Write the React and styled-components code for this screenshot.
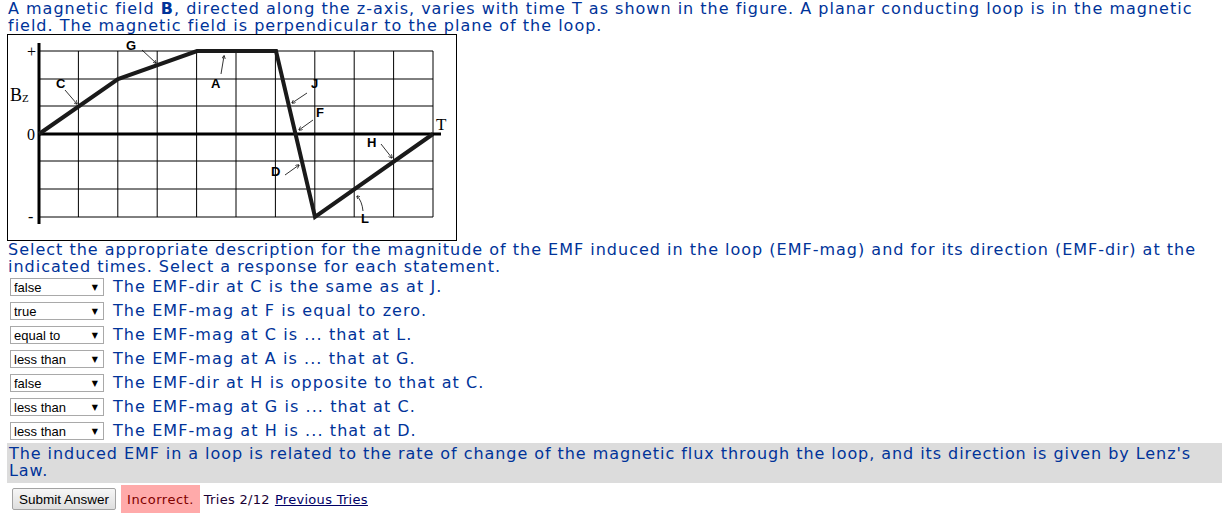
import styled, { createGlobalStyle } from 'styled-components';

const GlobalStyle = createGlobalStyle`
body {
  margin: 0 7px;
  background: #fff;
  font-family: "DejaVu Sans", Verdana, sans-serif;
  font-size: 16px;
  letter-spacing: 1px;
  color: #003399;
}
`;

const Page = styled.div`
padding-top: 1px;
`;

const Para = styled.p`
margin: 0 0 0 1px;
line-height: 16.5px;
`;

const Figure = styled.div`
width: 448px;
height: 205px;
border: 1px solid #000;
margin: 0 0 1px;
`;

const Rows = styled.div`
display: flex;
flex-direction: column;
`;

const Row = styled.div`
display: flex;
align-items: center;
height: 24px;
`;

const SelectBox = styled.div`
display: flex;
align-items: center;
width: 92px;
height: 16px;
margin: 0 9px 0 3px;
border: 1px solid #a9a9a9;
background: #fff;
`;

const Select = styled.select`
appearance: none;
flex: 1;
min-width: 0;
border: none;
outline: none;
background: transparent;
padding: 0 0 0 3px;
font-family: "Liberation Sans", Arial, sans-serif;
font-size: 13px;
letter-spacing: 0;
color: #000;
`;

const Arrow = styled.span`
font-size: 8px;
letter-spacing: 0;
color: #000;
margin-right: 5px;
`;

const Statement = styled.span`
line-height: 24px;
letter-spacing: 1.08px;
`;

const Hint = styled.div`
background: #dcdcdc;
padding: 3px 4px 4px 3px;
margin: 0 0 0 -1px;
line-height: 16.5px;
letter-spacing: 0.94px;
`;

const Actions = styled.div`
display: flex;
align-items: center;
height: 28px;
margin-top: 2px;
font-size: 13px;
letter-spacing: 0.3px;
`;

const SubmitButton = styled.button`
height: 22px;
margin: 0 5px 0 5px;
padding: 0 6px;
border: 1px solid #a3a3a3;
border-radius: 2px;
background: linear-gradient(#f6f6f6, #dedede);
font-family: "Liberation Sans", Arial, sans-serif;
font-size: 13.5px;
letter-spacing: 0;
color: #000;
`;

const Verdict = styled.span`
display: flex;
align-items: center;
height: 28px;
padding: 0 6px 0 6px;
background: #ffaaaa;
color: #800000;
letter-spacing: 0.5px;
`;

const Tries = styled.span`
margin-left: 4px;
color: #1a0033;
`;

const PrevLink = styled.a`
margin-left: 5px;
color: #000066;
text-decoration: underline;
`;

const xs = [39, 78.4, 117.8, 157.2, 196.6, 236, 275.4, 314.8, 354.2, 393.6, 433];
const ys = [50, 78, 105, 160, 188, 216];
const curve = '39,133 118,78 197,50 276,50 315,216 433,133';

const pointers = [
  { l: 'C', x: 56, y: 87, d: 'M65 89 L77 103' },
  { l: 'G', x: 126, y: 49, d: 'M142 49 L156 62' },
  { l: 'A', x: 211, y: 87, d: 'M221 73 L224 55' },
  { l: 'J', x: 311, y: 87, d: 'M307 92 L292 102' },
  { l: 'F', x: 316, y: 116, d: 'M313 119 L299 129' },
  { l: 'D', x: 271, y: 175, d: 'M285 174 L299 164' },
  { l: 'H', x: 367, y: 146, d: 'M381 143 L392 157' },
  { l: 'L', x: 361, y: 222, d: 'M363 210 Q362 200 357 195' },
];

const Graph = () => (
  <svg width="448" height="205" viewBox="8 34 448 205">
    <defs>
      <marker id="head" viewBox="0 0 6 6" refX="5" refY="3" markerWidth="5" markerHeight="5" orient="auto">
        <path d="M0 0 L6 3 L0 6" fill="none" stroke="#000" strokeWidth="1" />
      </marker>
    </defs>
    {xs.slice(1).map(x => (
      <line key={x} x1={x} y1="50" x2={x} y2="216" stroke="#000" strokeWidth="1" />
    ))}
    {ys.map(y => (
      <line key={y} x1="39" y1={y} x2="433" y2={y} stroke="#000" strokeWidth="1" />
    ))}
    <line x1="39" y1="42" x2="39" y2="223" stroke="#000" strokeWidth="3" />
    <line x1="39" y1="133" x2="441" y2="133" stroke="#000" strokeWidth="3" />
    <polyline points={curve} fill="none" stroke="#1a1a1a" strokeWidth="4" strokeLinejoin="miter" />
    <g fontFamily="'Liberation Serif', 'Times New Roman', serif" fill="#000" letterSpacing="0">
      <text x="27" y="56" fontSize="16">+</text>
      <text x="10" y="100" fontSize="18">B</text>
      <text x="22" y="101" fontSize="11">Z</text>
      <text x="27" y="139" fontSize="16">0</text>
      <text x="28" y="221" fontSize="16">-</text>
      <text x="436" y="129" fontSize="17">T</text>
    </g>
    <g fontFamily="'Liberation Sans', Arial, sans-serif" fontSize="13" fontWeight="bold" fill="#000" letterSpacing="0">
      {pointers.map(p => (
        <text key={p.l} x={p.x} y={p.y}>{p.l}</text>
      ))}
    </g>
    {pointers.map(p => (
      <path key={p.l} d={p.d} fill="none" stroke="#000" strokeWidth="0.8" markerEnd="url(#head)" />
    ))}
  </svg>
);

const statements = [
  ['false', 'The EMF-dir at C is the same as at J.'],
  ['true', 'The EMF-mag at F is equal to zero.'],
  ['equal to', 'The EMF-mag at C is ... that at L.'],
  ['less than', 'The EMF-mag at A is ... that at G.'],
  ['false', 'The EMF-dir at H is opposite to that at C.'],
  ['less than', 'The EMF-mag at G is ... that at C.'],
  ['less than', 'The EMF-mag at H is ... that at D.'],
];

const options = ['true', 'false', 'greater than', 'less than', 'equal to'];

const App = () => (
  <Page>
    <GlobalStyle />
    <Para>
      A magnetic field <b>B</b>, directed along the z-axis, varies with time T as shown in the figure. A planar conducting loop is in the magnetic field. The magnetic field is perpendicular to the plane of the loop.
    </Para>
    <Figure>
      <Graph />
    </Figure>
    <Para>
      Select the appropriate description for the magnitude of the EMF induced in the loop (EMF-mag) and for its direction (EMF-dir) at the indicated times. Select a response for each statement.
    </Para>
    <Rows>
      {statements.map(([value, text], i) => (
        <Row key={i}>
          <SelectBox>
            <Select defaultValue={value}>
              {options.map(o => (
                <option key={o} value={o}>{o}</option>
              ))}
            </Select>
            <Arrow>▼</Arrow>
          </SelectBox>
          <Statement>{text}</Statement>
        </Row>
      ))}
    </Rows>
    <Hint>
      The induced EMF in a loop is related to the rate of change of the magnetic flux through the loop, and its direction is given by Lenz's Law.
    </Hint>
    <Actions>
      <SubmitButton>Submit Answer</SubmitButton>
      <Verdict>Incorrect.</Verdict>
      <Tries>Tries 2/12</Tries>
      <PrevLink href="#">Previous Tries</PrevLink>
    </Actions>
  </Page>
);

export default App;
